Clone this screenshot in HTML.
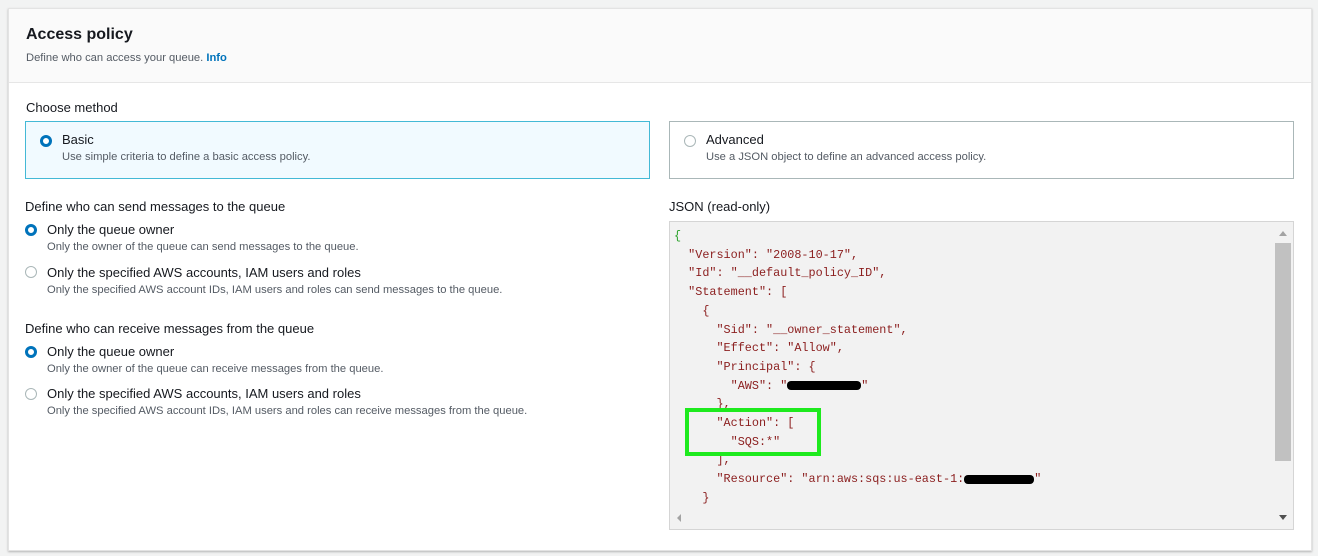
<!DOCTYPE html>
<html><head><meta charset="utf-8"><style>
body{margin:0;width:1318px;height:556px;background:#f2f3f3;font-family:"Liberation Sans",sans-serif;color:#16191f;position:relative;overflow:hidden}
.card{position:absolute;left:8px;top:8px;width:1302px;height:541px;background:#fff;border:1px solid #e3e3e3;box-shadow:0 1px 2px rgba(0,0,0,.25)}
.hdr{position:absolute;left:0;top:0;right:0;height:73px;background:#fafafa;border-bottom:1px solid #e6e6e6}
.a{position:absolute;white-space:nowrap}
.t{font-size:16px;font-weight:bold}
.s{font-size:11.2px;color:#545b64}
.l{font-size:13px;color:#16191f}
.tile{position:absolute;height:56px;border:1px solid #aab7b8}
.rad{position:absolute;width:12px;height:12px;border-radius:50%;box-sizing:border-box}
.on{border:3.5px solid #0073bb;background:#fff}
.off{border:1px solid #aab7b8;background:#fff}
.json{position:absolute;left:669px;top:221px;width:623px;height:307px;background:#f2f2f2;border:1px solid #d5d5d5;font-family:"Liberation Mono",monospace;font-size:11.8px;color:#8b1e1e;overflow:hidden}
.json pre{margin:0;position:absolute;left:4px;top:5px;font:inherit;line-height:18.7px}
.blk{display:inline-block;background:#000;height:9px;border-radius:4px;vertical-align:middle}
</style></head><body>
<div class="card">
<div class="hdr"></div>
<div class="a t" style="left:17px;top:17px">Access policy</div>
<div class="a s" style="left:17px;top:43px">Define who can access your queue. <b style="color:#0073bb">Info</b></div>
<div class="a l" style="left:17px;top:91px">Choose method</div>
</div>
<div class="tile" style="left:25px;top:121px;width:623px;background:#f1faff;border-color:#44b9d6"></div>
<div class="rad on" style="left:40px;top:135px"></div>
<div class="a l" style="left:62px;top:132px">Basic</div>
<div class="a s" style="left:62px;top:151px">Use simple criteria to define a basic access policy.</div>
<div class="tile" style="left:669px;top:121px;width:623px;background:#fff"></div>
<div class="rad off" style="left:684px;top:135px"></div>
<div class="a l" style="left:706px;top:132px">Advanced</div>
<div class="a s" style="left:706px;top:151px">Use a JSON object to define an advanced access policy.</div>

<div class="a l" style="left:25px;top:199px">Define who can send messages to the queue</div>
<div class="rad on" style="left:25px;top:224px"></div>
<div class="a l" style="left:47px;top:222px">Only the queue owner</div>
<div class="a s" style="left:47px;top:241px">Only the owner of the queue can send messages to the queue.</div>
<div class="rad off" style="left:25px;top:266px"></div>
<div class="a l" style="left:47px;top:265px">Only the specified AWS accounts, IAM users and roles</div>
<div class="a s" style="left:47px;top:284px">Only the specified AWS account IDs, IAM users and roles can send messages to the queue.</div>

<div class="a l" style="left:25px;top:321px">Define who can receive messages from the queue</div>
<div class="rad on" style="left:25px;top:346px"></div>
<div class="a l" style="left:47px;top:344px">Only the queue owner</div>
<div class="a s" style="left:47px;top:363px">Only the owner of the queue can receive messages from the queue.</div>
<div class="rad off" style="left:25px;top:388px"></div>
<div class="a l" style="left:47px;top:386px">Only the specified AWS accounts, IAM users and roles</div>
<div class="a s" style="left:47px;top:405px">Only the specified AWS account IDs, IAM users and roles can receive messages from the queue.</div>

<div class="a l" style="left:669px;top:199px">JSON (read-only)</div>
<div class="json"><pre><span style="color:#2aa22a">{</span>
  "Version": "2008-10-17",
  "Id": "__default_policy_ID",
  "Statement": [
    {
      "Sid": "__owner_statement",
      "Effect": "Allow",
      "Principal": {
        "AWS": "<span class="blk" style="width:74px"></span>"
      },
      "Action": [
        "SQS:*"
      ],
      "Resource": "arn:aws:sqs:us-east-1:<span class="blk" style="width:70px"></span>"
    }</pre>
<div style="position:absolute;left:604px;top:0;width:18px;height:306px;background:#f2f2f2"></div>
<div style="position:absolute;left:605px;top:21px;width:16px;height:218px;background:#c1c1c1"></div>
<div style="position:absolute;left:609px;top:9px;width:0;height:0;border:4px solid transparent;border-bottom:5px solid #a3a3a3;border-top:0"></div>
<div style="position:absolute;left:609px;top:293px;width:0;height:0;border:4px solid transparent;border-top:5px solid #505050;border-bottom:0"></div>
<div style="position:absolute;left:7px;top:292px;width:0;height:0;border:4px solid transparent;border-right:4px solid #a3a3a3;border-left:0"></div>
</div>
<div style="position:absolute;left:685px;top:408px;width:136px;height:48px;border:4px solid #1eea1e;box-sizing:border-box"></div>
</body></html>
